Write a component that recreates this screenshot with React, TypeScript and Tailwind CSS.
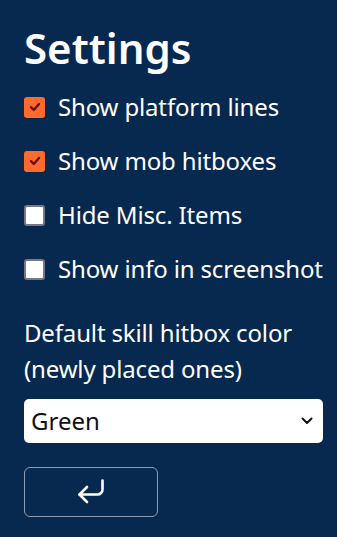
import React, { useState } from "react";

const options = [
  { key: "platform", label: "Show platform lines", on: true },
  { key: "mob", label: "Show mob hitboxes", on: true },
  { key: "misc", label: "Hide Misc. Items", on: false },
  { key: "info", label: "Show info in screenshot", on: false },
];

const Check = ({ checked }: { checked: boolean }) =>
  checked ? (
    <span className="flex h-[21px] w-[21px] shrink-0 items-center justify-center rounded-[3px] bg-[#ff6b2c]">
      <svg width="14" height="14" viewBox="0 0 14 14" fill="none">
        <path
          d="M3 7.2 5.8 10 11 4"
          stroke="#6a1010"
          strokeWidth="2.4"
          strokeLinecap="round"
          strokeLinejoin="round"
        />
      </svg>
    </span>
  ) : (
    <span className="h-[21px] w-[21px] shrink-0 rounded-[3px] border-[2.5px] border-[#77778a] bg-white" />
  );

export default function App() {
  const [state, setState] = useState<Record<string, boolean>>(
    Object.fromEntries(options.map((o) => [o.key, o.on]))
  );

  return (
    <div className="min-h-[537px] w-full overflow-hidden bg-[#07294f] pl-6 pr-[14px] pt-[22px] text-white font-['Noto_Sans',sans-serif]">
      <h1 className="text-[42px] font-semibold leading-[52px]">Settings</h1>

      <div className="mt-[15px] flex flex-col gap-[18px]">
        {options.map((o) => (
          <label
            key={o.key}
            className="flex h-9 cursor-pointer items-center gap-[13px] whitespace-nowrap text-[24px] leading-9 tracking-[-0.15px]"
            onClick={() => setState((s) => ({ ...s, [o.key]: !s[o.key] }))}
          >
            <Check checked={state[o.key]} />
            <span>{o.label}</span>
          </label>
        ))}
      </div>

      <p className="mt-[28px] text-[24px] leading-9 tracking-[-0.15px]">
        Default skill hitbox color
        <br />
        (newly placed ones)
      </p>

      <div className="relative mt-[12px]">
        <select className="h-[44px] w-full appearance-none rounded-[5px] bg-white pl-[7px] text-[24px] text-[#111] font-['Noto_Sans',sans-serif] outline-none">
          <option>Green</option>
          <option>Red</option>
          <option>Blue</option>
          <option>Yellow</option>
        </select>
        <svg
          className="pointer-events-none absolute right-[10px] top-1/2 -translate-y-1/2"
          width="12"
          height="8"
          viewBox="0 0 12 8"
          fill="none"
        >
          <path d="M1.5 1.5 6 6l4.5-4.5" stroke="#111" strokeWidth="2" strokeLinecap="round" strokeLinejoin="round" />
        </svg>
      </div>

      <button className="mt-[24px] flex h-[50px] w-[134px] items-center justify-center rounded-[6px] border border-[#8d9bb0]">
        <svg width="28" height="26" viewBox="0 0 28 26" fill="none" stroke="white" strokeWidth="2.6" strokeLinecap="round" strokeLinejoin="round">
          <path d="M25.5 1.5v9a5 5 0 0 1-5 5H2.5" />
          <path d="M10 8 2.5 15.5 10 23" />
        </svg>
      </button>
    </div>
  );
}
